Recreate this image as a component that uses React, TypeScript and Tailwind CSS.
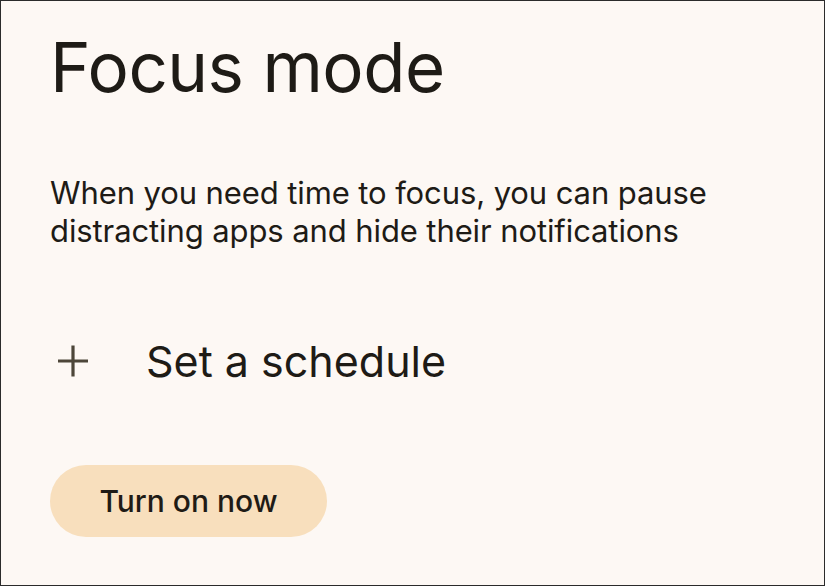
export default function App() {
  return (
    <div className="w-[825px] h-[586px] border border-[#2b2b2b] bg-[#fdf8f4] text-[#1e1b16] flex flex-col pl-[49px] pr-4 font-['Inter','Noto_Sans',sans-serif] overflow-hidden">
      <h1 className="mt-[22px] text-[69px] leading-[88px] tracking-[-0.5px] font-normal">Focus mode</h1>
      <p className="mt-[63px] text-[31px] leading-[38px] font-normal tracking-[-0.1px]">
        When you need time to focus, you can pause
        <br />
        distracting apps and hide their notifications
      </p>
      <div className="mt-[81px] flex items-center h-[60px]">
        <svg width="32" height="34" viewBox="0 0 32 34" className="ml-[7px] text-[#4d4639]">
          <path d="M16 1.5v31M1 17h30" stroke="currentColor" strokeWidth="3.2" fill="none" />
        </svg>
        <span className="ml-[57px] text-[43px] leading-[60px]">Set a schedule</span>
      </div>
      <button className="mt-[74px] w-[277px] h-[72px] rounded-full bg-[#f8dfbd] text-[#1f1b16] text-[30px] font-medium flex items-center justify-center">
        Turn on now
      </button>
    </div>
  );
}
